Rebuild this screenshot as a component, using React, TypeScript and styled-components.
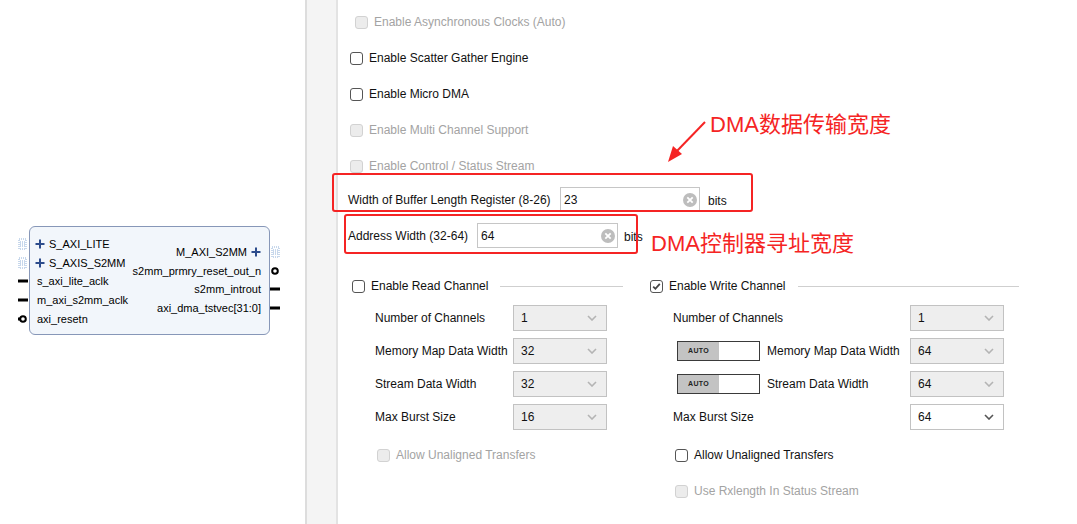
import React from "react";
import styled, { createGlobalStyle } from "styled-components";

const Global = createGlobalStyle`
  html, body, #root {
    margin: 0;
    padding: 0;
    height: 100%;
  }
  body {
    font-family: "Liberation Sans", "Noto Sans CJK SC", sans-serif;
    font-size: 12px;
    color: #111;
    background: #fff;
    overflow: hidden;
  }
`;

const Page = styled.div`
  position: relative;
  display: flex;
  width: 1077px;
  height: 524px;
  background: #fff;
`;

/* ---------- block diagram canvas ---------- */

const Canvas = styled.div`
  position: relative;
  width: 305px;
  flex-shrink: 0;
  background: #fff;
`;

const Block = styled.div`
  position: absolute;
  left: 29px;
  top: 226px;
  width: 241px;
  height: 109px;
  box-sizing: border-box;
  border: 1px solid #8797b8;
  border-radius: 6px;
  background: #f2f6fb;
  display: flex;
  justify-content: space-between;
  font-size: 11px;
  color: #000;
`;

const PortColumn = styled.div<{ $side: "left" | "right"; $top: number }>`
  display: flex;
  flex-direction: column;
  align-items: ${(p) => (p.$side === "left" ? "flex-start" : "flex-end")};
  padding-top: ${(p) => p.$top}px;
`;

const PortRow = styled.div<{ $side: "left" | "right" }>`
  position: relative;
  height: 18.6px;
  display: flex;
  align-items: center;
  gap: 4px;
  white-space: nowrap;
  ${(p) => (p.$side === "left" ? "padding-left: 5px;" : "padding-right: 8px;")}
  align-self: stretch;
  justify-content: ${(p) => (p.$side === "left" ? "flex-start" : "flex-end")};
`;

const Pin = styled.span<{ $side: "left" | "right" }>`
  position: absolute;
  top: 50%;
  transform: translateY(-50%);
  display: flex;
  ${(p) => (p.$side === "left" ? "left: -12px;" : "right: -11px;")}
`;

const PlainName = styled.span<{ $shift: boolean }>`
  margin-left: ${(p) => (p.$shift ? 2 : 0)}px;
`;

const Plus = () => (
  <svg width="10" height="10" viewBox="0 0 10 10">
    <path d="M5 0.5v9M0.5 5h9" stroke="#2d4c8c" strokeWidth="2" />
  </svg>
);

type PinKind = "bus" | "line" | "circle";

const PinGlyph = ({ kind, side }: { kind: PinKind; side: "left" | "right" }) => {
  if (kind === "bus")
    return (
      <svg width="9" height="12" viewBox="0 0 9 12">
        <rect x="1" y="1" width="7" height="10" fill="none" stroke="#8fb0d8" strokeWidth="1" strokeDasharray="1 1" />
        <path d="M2 4h5M2 6h5M2 8h5" stroke="#8fb0d8" strokeWidth="1" strokeDasharray="1 1" />
      </svg>
    );
  if (kind === "line")
    return (
      <svg width="10" height="4" viewBox="0 0 10 4">
        <rect x="0" y="0.5" width="10" height="3" fill="#000" />
      </svg>
    );
  return (
    <svg width="10" height="10" viewBox="0 0 10 10">
      {side === "left" ? <rect x="0" y="3.5" width="3" height="3" fill="#000" /> : null}
      <circle cx="5" cy="5" r="2.8" fill="#fff" stroke="#000" strokeWidth="2" />
    </svg>
  );
};

const leftPorts: { name: string; pin: PinKind; plus?: boolean }[] = [
  { name: "S_AXI_LITE", pin: "bus", plus: true },
  { name: "S_AXIS_S2MM", pin: "bus", plus: true },
  { name: "s_axi_lite_aclk", pin: "line" },
  { name: "m_axi_s2mm_aclk", pin: "line" },
  { name: "axi_resetn", pin: "circle" },
];

const rightPorts: { name: string; pin: PinKind; plus?: boolean }[] = [
  { name: "M_AXI_S2MM", pin: "bus", plus: true },
  { name: "s2mm_prmry_reset_out_n", pin: "circle" },
  { name: "s2mm_introut", pin: "line" },
  { name: "axi_dma_tstvec[31:0]", pin: "line" },
];

/* ---------- splitter ---------- */

const Splitter = styled.div`
  width: 33px;
  flex-shrink: 0;
  box-sizing: border-box;
  background: #f4f4f4;
  border-left: 2px solid #dddddd;
  border-right: 2px solid #e3e3e3;
`;

/* ---------- settings panel ---------- */

const Panel = styled.div`
  flex: 1;
  display: flex;
  flex-direction: column;
  padding: 4px 0 0 12px;
`;

const CheckRow = styled.div<{ $indent?: number; $gapTop?: number }>`
  height: 36px;
  display: flex;
  align-items: center;
  gap: 6px;
  padding-left: ${(p) => p.$indent ?? 0}px;
  margin-top: ${(p) => p.$gapTop ?? 0}px;
  white-space: nowrap;
`;

const Label = styled.span<{ $disabled?: boolean }>`
  color: ${(p) => (p.$disabled ? "#a3a3a3" : "#111")};
`;

const Box = styled.span<{ $disabled?: boolean }>`
  width: 13px;
  height: 13px;
  box-sizing: border-box;
  border-radius: 3px;
  border: 1px solid ${(p) => (p.$disabled ? "#d2d2d2" : "#555")};
  background: ${(p) => (p.$disabled ? "#ececec" : "#fff")};
  display: flex;
  align-items: center;
  justify-content: center;
  flex-shrink: 0;
`;

const Check = ({ checked, disabled }: { checked?: boolean; disabled?: boolean }) => (
  <Box $disabled={disabled}>
    {checked && (
      <svg width="9" height="9" viewBox="0 0 9 9">
        <path d="M1.2 4.6l2.2 2.2 4.4-5" fill="none" stroke="#444" strokeWidth="1.8" />
      </svg>
    )}
  </Box>
);

const FieldRow = styled.div<{ $height: number }>`
  height: ${(p) => p.$height}px;
  display: flex;
  align-items: center;
  margin-left: -2px;
  white-space: nowrap;
`;

const FieldLabel = styled.span<{ $width: number }>`
  width: ${(p) => p.$width}px;
  flex-shrink: 0;
`;

const TextInput = styled.div<{ $width: number }>`
  position: relative;
  width: ${(p) => p.$width}px;
  height: 25px;
  box-sizing: border-box;
  border: 1px solid #c6c6c6;
  background: #fff;
  display: flex;
  align-items: center;
  padding-left: 3px;
`;

const ClearIcon = styled.span`
  position: absolute;
  right: 2px;
  top: 5px;
  display: flex;
`;

const Unit = styled.span<{ $gap: number }>`
  margin-left: ${(p) => p.$gap}px;
  padding-top: 3px;
`;

const Clear = () => (
  <svg width="14" height="14" viewBox="0 0 14 14">
    <circle cx="7" cy="7" r="7" fill="#bdbdbd" />
    <path d="M4.3 4.3l5.4 5.4M9.7 4.3l-5.4 5.4" stroke="#fff" strokeWidth="1.8" />
  </svg>
);

const ChannelGrid = styled.div`
  display: grid;
  grid-template-columns: 275px 373px;
  column-gap: 23px;
  margin-top: 15px;
`;

const Channel = styled.div`
  display: flex;
  flex-direction: column;
`;

const ChannelHeader = styled.div`
  height: 30px;
  display: flex;
  align-items: center;
  gap: 6px;
  padding-left: 2px;
  white-space: nowrap;
`;

const Rule = styled.div<{ $gap: number }>`
  flex: 1;
  height: 1px;
  margin-left: ${(p) => p.$gap}px;
  margin-right: 2px;
  background: #cfcfcf;
`;

const SelectRow = styled.div`
  height: 33px;
  display: flex;
  align-items: center;
  padding-left: 25px;
  white-space: nowrap;
`;

const SelectLabel = styled.div<{ $width: number }>`
  width: ${(p) => p.$width}px;
  flex-shrink: 0;
  display: flex;
  align-items: center;
  gap: 7px;
`;

const SelectBox = styled.div<{ $enabled?: boolean }>`
  width: 94px;
  height: 26px;
  box-sizing: border-box;
  border: 1px solid #c2c2c2;
  background: ${(p) => (p.$enabled ? "#fff" : "#eeeeee")};
  display: flex;
  align-items: center;
  justify-content: space-between;
  padding: 0 9px 0 7px;
`;

const Chevron = ({ dark }: { dark?: boolean }) => (
  <svg width="10" height="6" viewBox="0 0 10 6">
    <path d="M1 1l4 4 4-4" fill="none" stroke={dark ? "#555" : "#b4b4b4"} strokeWidth="1.6" />
  </svg>
);

const Select = ({ value, enabled }: { value: string; enabled?: boolean }) => (
  <SelectBox $enabled={enabled}>
    <span>{value}</span>
    <Chevron dark={enabled} />
  </SelectBox>
);

const AutoToggle = styled.div`
  width: 83px;
  height: 20px;
  box-sizing: border-box;
  border: 1px solid #3a3a3a;
  display: flex;
  margin-left: 4px;
  flex-shrink: 0;
  background: #fff;

  > span {
    width: 41px;
    background: #c3c3c3;
    font-size: 7px;
    font-weight: bold;
    color: #222;
    display: flex;
    align-items: center;
    justify-content: center;
    letter-spacing: 0.3px;
  }
`;

/* ---------- annotations ---------- */

const RedBox = styled.div<{ $x: number; $y: number; $w: number; $h: number }>`
  position: absolute;
  left: ${(p) => p.$x}px;
  top: ${(p) => p.$y}px;
  width: ${(p) => p.$w}px;
  height: ${(p) => p.$h}px;
  box-sizing: border-box;
  border: 2px solid #f52424;
  border-radius: 3px;
  pointer-events: none;
`;

const Note = styled.div<{ $x: number; $y: number }>`
  position: absolute;
  left: ${(p) => p.$x}px;
  top: ${(p) => p.$y}px;
  font-family: "Liberation Sans", "Noto Sans CJK SC", sans-serif;
  font-size: 22px;
  line-height: 26px;
  color: #f52424;
  white-space: nowrap;
`;

const Arrow = styled.svg`
  position: absolute;
  left: 660px;
  top: 118px;
`;

export default function App() {
  return (
    <Page>
      <Global />
      <Canvas>
        <Block>
          <PortColumn $side="left" $top={8}>
            {leftPorts.map((p) => (
              <PortRow key={p.name} $side="left">
                <Pin $side="left">
                  <PinGlyph kind={p.pin} side="left" />
                </Pin>
                {p.plus && <Plus />}
                <PlainName $shift={!p.plus}>{p.name}</PlainName>
              </PortRow>
            ))}
          </PortColumn>
          <PortColumn $side="right" $top={16}>
            {rightPorts.map((p) => (
              <PortRow key={p.name} $side="right">
                <span>{p.name}</span>
                {p.plus && <Plus />}
                <Pin $side="right">
                  <PinGlyph kind={p.pin} side="right" />
                </Pin>
              </PortRow>
            ))}
          </PortColumn>
        </Block>
      </Canvas>

      <Splitter />

      <Panel>
        <CheckRow $indent={5}>
          <Check disabled />
          <Label $disabled>Enable Asynchronous Clocks (Auto)</Label>
        </CheckRow>
        <CheckRow>
          <Check />
          <Label>Enable Scatter Gather Engine</Label>
        </CheckRow>
        <CheckRow>
          <Check />
          <Label>Enable Micro DMA</Label>
        </CheckRow>
        <CheckRow>
          <Check disabled />
          <Label $disabled>Enable Multi Channel Support</Label>
        </CheckRow>
        <CheckRow>
          <Check disabled />
          <Label $disabled>Enable Control / Status Stream</Label>
        </CheckRow>

        <FieldRow $height={31}>
          <FieldLabel $width={212}>Width of Buffer Length Register (8-26)</FieldLabel>
          <TextInput $width={140}>
            23
            <ClearIcon>
              <Clear />
            </ClearIcon>
          </TextInput>
          <Unit $gap={8}>bits</Unit>
        </FieldRow>
        <FieldRow $height={41}>
          <FieldLabel $width={129}>Address Width (32-64)</FieldLabel>
          <TextInput $width={141}>
            64
            <ClearIcon>
              <Clear />
            </ClearIcon>
          </TextInput>
          <Unit $gap={6}>bits</Unit>
        </FieldRow>

        <ChannelGrid>
          <Channel>
            <ChannelHeader>
              <Check />
              <Label>Enable Read Channel</Label>
              <Rule $gap={6} />
            </ChannelHeader>
            <SelectRow>
              <SelectLabel $width={138}>Number of Channels</SelectLabel>
              <Select value="1" />
            </SelectRow>
            <SelectRow>
              <SelectLabel $width={138}>Memory Map Data Width</SelectLabel>
              <Select value="32" />
            </SelectRow>
            <SelectRow>
              <SelectLabel $width={138}>Stream Data Width</SelectLabel>
              <Select value="32" />
            </SelectRow>
            <SelectRow>
              <SelectLabel $width={138}>Max Burst Size</SelectLabel>
              <Select value="16" />
            </SelectRow>
            <CheckRow $indent={27} $gapTop={4}>
              <Check disabled />
              <Label $disabled>Allow Unaligned Transfers</Label>
            </CheckRow>
          </Channel>

          <Channel>
            <ChannelHeader>
              <Check checked />
              <Label>Enable Write Channel</Label>
              <Rule $gap={6} />
            </ChannelHeader>
            <SelectRow>
              <SelectLabel $width={237}>Number of Channels</SelectLabel>
              <Select value="1" />
            </SelectRow>
            <SelectRow>
              <SelectLabel $width={237}>
                <AutoToggle>
                  <span>AUTO</span>
                </AutoToggle>
                Memory Map Data Width
              </SelectLabel>
              <Select value="64" />
            </SelectRow>
            <SelectRow>
              <SelectLabel $width={237}>
                <AutoToggle>
                  <span>AUTO</span>
                </AutoToggle>
                Stream Data Width
              </SelectLabel>
              <Select value="64" />
            </SelectRow>
            <SelectRow>
              <SelectLabel $width={237}>Max Burst Size</SelectLabel>
              <Select value="64" enabled />
            </SelectRow>
            <CheckRow $indent={27} $gapTop={4}>
              <Check />
              <Label>Allow Unaligned Transfers</Label>
            </CheckRow>
            <CheckRow $indent={27}>
              <Check disabled />
              <Label $disabled>Use Rxlength In Status Stream</Label>
            </CheckRow>
          </Channel>
        </ChannelGrid>
      </Panel>

      <RedBox $x={332} $y={173} $w={421} $h={39} />
      <RedBox $x={344} $y={214} $w={294} $h={40} />
      <Note $x={710} $y={112}>DMA数据传输宽度</Note>
      <Note $x={651} $y={231}>DMA控制器寻址宽度</Note>
      <Arrow width="50" height="50" viewBox="0 0 50 50">
        <path d="M45 4L16 34" stroke="#f52424" strokeWidth="2" />
        <path d="M8 44L13 28L22 36Z" fill="#f52424" />
      </Arrow>
    </Page>
  );
}
